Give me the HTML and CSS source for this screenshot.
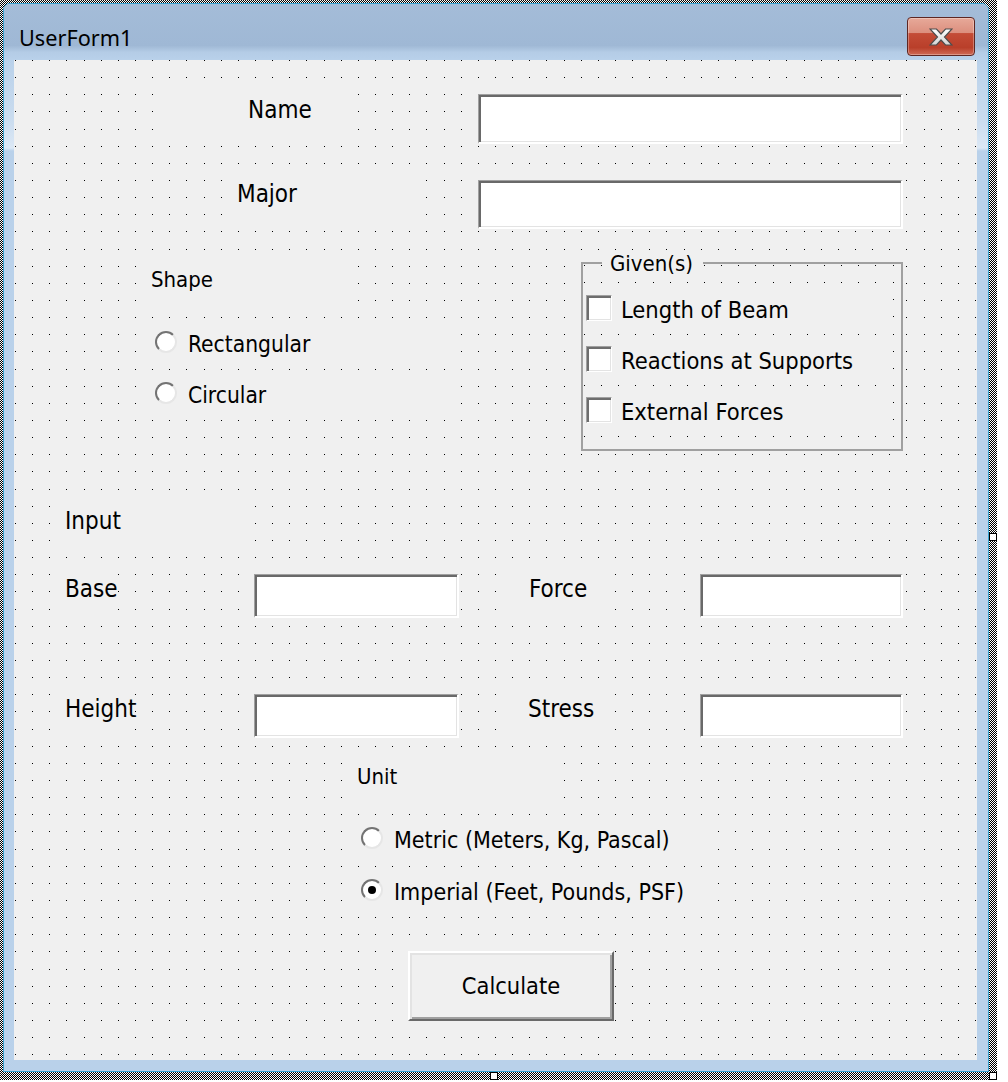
FILE: index.html
```html
<!DOCTYPE html>
<html lang="en">
<head>
<meta charset="utf-8">
<title>UserForm1</title>
<link rel="stylesheet" href="styles.css">
</head>
<body>
<div class="sel">
  <div class="window">
    <div class="titlebar">
      <span class="title">UserForm1</span>
      <div class="close">
        <svg width="24" height="18" viewBox="0 0 24 18" aria-hidden="true">
          <defs>
            <linearGradient id="xg" x1="0" y1="0" x2="0" y2="1">
              <stop offset="0" stop-color="#ffffff"/>
              <stop offset="1" stop-color="#d4d4d4"/>
            </linearGradient>
          </defs>
          <polygon points="1,1 7.5,1 12,6 16.5,1 23,1 15.5,9 23,17 16.5,17 12,12 7.5,17 1,17 8.5,9" fill="url(#xg)" stroke="#4d4d4d" stroke-width="1.2" stroke-linejoin="miter"/>
        </svg>
      </div>
    </div>
    <div class="frame-body">
      <div class="client">
        <div class="row r-name">
          <div class="lbl lbl-name">Name</div>
          <div class="tb tb-name"></div>
        </div>
        <div class="row r-major">
          <div class="lbl lbl-major">Major</div>
          <div class="tb tb-major"></div>
        </div>
        <div class="row r-shape">
          <div class="shape-col">
            <div class="lbl lbl-small lbl-shape">Shape</div>
            <div class="radio r1"><span class="rb"></span><span class="rt">Rectangular</span></div>
            <div class="radio r2"><span class="rb"></span><span class="rt">Circular</span></div>
          </div>
          <div class="group">
            <div class="legend">Given(s)</div>
            <div class="chk c1"><span class="cb"></span><span class="ct">Length of Beam</span></div>
            <div class="chk c2"><span class="cb"></span><span class="ct">Reactions at Supports</span></div>
            <div class="chk c3"><span class="cb"></span><span class="ct">External Forces</span></div>
          </div>
        </div>
        <div class="lbl lbl-input">Input</div>
        <div class="row r-base">
          <div class="lbl lbl-base">Base</div>
          <div class="tb tb-base"></div>
          <div class="lbl lbl-force">Force</div>
          <div class="tb tb-force"></div>
        </div>
        <div class="row r-height">
          <div class="lbl lbl-height">Height</div>
          <div class="tb tb-height"></div>
          <div class="lbl lbl-stress">Stress</div>
          <div class="tb tb-force"></div>
        </div>
        <div class="lbl lbl-small lbl-unit">Unit</div>
        <div class="radio r3 unit-radio"><span class="rb"></span><span class="rt">Metric (Meters, Kg, Pascal)</span></div>
        <div class="radio r4 unit-radio"><span class="rb on"></span><span class="rt">Imperial (Feet, Pounds, PSF)</span></div>
        <button class="btn" type="button">Calculate</button>
      </div>
    </div>
  </div>
  <span class="handle h-r"></span>
  <span class="handle h-b"></span>
  <span class="handle h-br"></span>
</div>
</body>
</html>
```

FILE: styles.css
```css
:root {
  /* designer grid: 7 dots per 120px tile (~17.14px pitch), crisp integer stops */
  --grid-rows: linear-gradient(to bottom,
    transparent 0 1px, #f0f0f0 1px 17px,
    transparent 17px 18px, #f0f0f0 18px 34px,
    transparent 34px 35px, #f0f0f0 35px 51px,
    transparent 51px 52px, #f0f0f0 52px 69px,
    transparent 69px 70px, #f0f0f0 70px 86px,
    transparent 86px 87px, #f0f0f0 87px 103px,
    transparent 103px 104px, #f0f0f0 104px 120px);
  --grid-cols: linear-gradient(to right,
    #000 0 1px, transparent 1px 17px,
    #000 17px 18px, transparent 18px 34px,
    #000 34px 35px, transparent 35px 51px,
    #000 51px 52px, transparent 52px 69px,
    #000 69px 70px, transparent 70px 86px,
    #000 86px 87px, transparent 87px 103px,
    #000 103px 104px, transparent 104px 120px);
}

* {
  box-sizing: border-box;
}

body {
  margin: 0;
  background: #ffffff;
  font-family: "DejaVu Sans Condensed", "DejaVu Sans", sans-serif;
  font-stretch: condensed;
  color: #000000;
}

/* designer selection frame (hatched) */
.sel {
  position: relative;
  width: 997px;
  height: 1080px;
  padding: 3px 8px 8px 3px;
  background: repeating-conic-gradient(#000 0 25%, #fff 0 50%) 0 0 / 2px 2px;
}

.window {
  width: 986px;
  height: 1069px;
  border: 1px solid #37a2cf;
  border-radius: 7px 7px 0 0;
  overflow: hidden;
  display: flex;
  flex-direction: column;
  background: #b9d1ea;
}

.titlebar {
  height: 56px;
  flex: none;
  display: flex;
  align-items: flex-start;
  padding-left: 15px;
  background: linear-gradient(#a4bcd8 0%, #9fb8d5 74%, #b4cce6 86%, #b9d1ea 100%);
}

.title {
  font-family: "Noto Sans", "Open Sans", sans-serif;
  font-stretch: normal;
  font-size: 21.7px;
  line-height: 28px;
  margin-top: 20px;
  color: #000;
}

.close {
  margin-left: auto;
  margin-right: 13px;
  margin-top: 13px;
  width: 68px;
  height: 39px;
  border: 1px solid #5e2622;
  border-radius: 4px;
  background: linear-gradient(#e7a999 0%, #dc8f7e 40%, #c44c37 42%, #b93f2a 80%, #cf6a55 100%);
  box-shadow: inset 0 0 0 1px rgba(255, 255, 255, 0.3);
  display: flex;
  align-items: center;
  justify-content: center;
}

.close svg {
  display: block;
}

.frame-body {
  flex: 1;
  padding: 0 11px 11px 10px;
  background: linear-gradient(#b9d1ea 0px, #cadcef 60px, #dce8f5 88px, #b9d1ea 91px, #b9d1ea 100%);
}

.client {
  width: 963px;
  height: 1000px;
  background-color: #f0f0f0;
  background-image: var(--grid-rows), var(--grid-cols);
  background-size: 120px 120px;
  background-position: 1px 0, 1px 0;
  display: flex;
  flex-direction: column;
  align-items: flex-start;
}

.row {
  display: flex;
  align-items: flex-start;
}

.lbl {
  background: #f0f0f0;
  font-size: 24px;
  line-height: 30px;
  white-space: nowrap;
  flex: none;
}

.lbl-small {
  font-size: 22px;
  line-height: 28px;
}

/* 3D sunken text box */
.tb {
  flex: none;
  background: #ffffff;
  border-style: solid;
  border-width: 1px 2px 2px 1px;
  border-color: #a0a0a0 #ffffff #ffffff #a0a0a0;
  box-shadow: inset 2px 2px 0 #696969, inset -1px -1px 0 #e3e3e3;
}

/* Name / Major */
.r-name {
  margin-top: 28px;
}

.lbl-name {
  margin-left: 144px;
  width: 200px;
  height: 47px;
  padding: 7px 0 0 90px;
}

.tb-name {
  margin-left: 120px;
  margin-top: 6px;
  width: 425px;
  height: 50px;
}

.r-major {
  margin-top: 32px;
}

.lbl-major {
  margin-left: 209px;
  width: 200px;
  height: 46px;
  padding: 3px 0 0 14px;
}

.tb-major {
  margin-left: 55px;
  margin-top: 4px;
  width: 425px;
  height: 49px;
}

/* Shape + Given(s) */
.r-shape {
  margin-top: 26px;
}

.shape-col {
  margin-left: 126px;
  width: 318px;
  display: flex;
  flex-direction: column;
  align-items: flex-start;
}

.lbl-shape {
  margin-top: 5px;
  width: 215px;
  height: 47px;
  padding: 6px 0 0 11px;
}

.radio {
  display: flex;
  align-items: flex-start;
  height: 26px;
  width: 318px;
  background: #f0f0f0;
  font-size: 22.6px;
  line-height: 26px;
  white-space: nowrap;
}

.r1 {
  margin-top: 22px;
}

.r2 {
  margin-top: 25px;
}

.rb {
  flex: none;
  width: 22px;
  height: 22px;
  margin: 2px 0 0 15px;
  border-radius: 50%;
  border: 2px solid;
  border-color: #737373 #e6e6e6 #e6e6e6 #737373;
  background: #ffffff;
  display: flex;
  align-items: center;
  justify-content: center;
}

.rb.on::after {
  content: "";
  width: 8px;
  height: 8px;
  border-radius: 50%;
  background: #000;
}

.rt {
  margin: 2px 0 0 11px;
}

.group {
  margin-left: 123px;
  margin-top: 7px;
  width: 322px;
  height: 189px;
  border: 2px solid #a0a0a0;
  background-color: #f0f0f0;
  background-image: var(--grid-rows), var(--grid-cols);
  background-size: 120px 120px;
  background-position: 1px 1px, 1px 1px;
  display: flex;
  flex-direction: column;
  align-items: flex-start;
}

.legend {
  margin: -13px 0 0 19px;
  height: 26px;
  padding: 0 10px 0 8px;
  background: #f0f0f0;
  font-size: 22px;
  line-height: 26px;
  white-space: nowrap;
}

.chk {
  display: flex;
  align-items: flex-start;
  width: 300px;
  height: 30px;
  margin-top: 21px;
  background: #f0f0f0;
  white-space: nowrap;
}

.c1 {
  margin-top: 16px;
}

.cb {
  flex: none;
  width: 26px;
  height: 26px;
  margin: 2px 0 0 3px;
  background: #ffffff;
  border: 1px solid;
  border-color: #a0a0a0 #ffffff #ffffff #a0a0a0;
  box-shadow: inset 2px 2px 0 #6d6d6d, inset -1px -1px 0 #e3e3e3;
}

.ct {
  margin: 2px 0 0 9px;
  font-size: 23.5px;
  line-height: 30px;
}

/* Input section */
.lbl-input {
  margin-top: 51px;
  margin-left: 38px;
  width: 193px;
  height: 46px;
  padding: 4px 0 0 13px;
}

.r-base {
  margin-top: 17px;
}

.r-height {
  margin-top: 67px;
}

.lbl-base {
  margin-left: 38px;
  width: 62px;
  height: 47px;
  padding: 9px 0 0 13px;
}

.lbl-height {
  margin-left: 38px;
  width: 80px;
  height: 47px;
  padding: 9px 0 0 13px;
}

.tb-base {
  margin-left: 140px;
  margin-top: 9px;
  width: 205px;
  height: 44px;
}

.tb-height {
  margin-left: 122px;
  margin-top: 9px;
  width: 205px;
  height: 44px;
}

.lbl-force,
.lbl-stress {
  margin-left: 53px;
  width: 98px;
  height: 45px;
  padding: 9px 0 0 17px;
}

.lbl-stress {
  padding-left: 16px;
}

.tb-force {
  margin-left: 90px;
  margin-top: 9px;
  width: 203px;
  height: 44px;
}

/* Unit */
.lbl-unit {
  margin-top: 19px;
  margin-left: 331px;
  width: 215px;
  height: 43px;
  padding: 6px 0 0 12px;
}

.unit-radio {
  margin-left: 331px;
  width: 370px;
}

.unit-radio .rb {
  margin-left: 16px;
}

.unit-radio .rt {
  font-size: 23px;
}

.r3 {
  margin-top: 25px;
}

.r4 {
  margin-top: 26px;
}

/* Command button */
.btn {
  margin-top: 48px;
  margin-left: 394px;
  width: 206px;
  height: 70px;
  padding: 0;
  font-family: inherit;
  font-stretch: inherit;
  font-size: 23.4px;
  line-height: 30px;
  color: #000;
  background: #f0f0f0;
  border: 2px solid;
  border-color: #ffffff #696969 #696969 #ffffff;
  box-shadow: inset 2px 2px 0 #e3e3e3, inset -2px -2px 0 #a0a0a0;
}

/* selection grab handles */
.handle {
  position: absolute;
  width: 8px;
  height: 8px;
  background: #fff;
  border: 1px solid #000;
}

.h-r {
  left: 989px;
  top: 533px;
}

.h-b {
  left: 490px;
  top: 1072px;
}

.h-br {
  left: 989px;
  top: 1072px;
}
```
